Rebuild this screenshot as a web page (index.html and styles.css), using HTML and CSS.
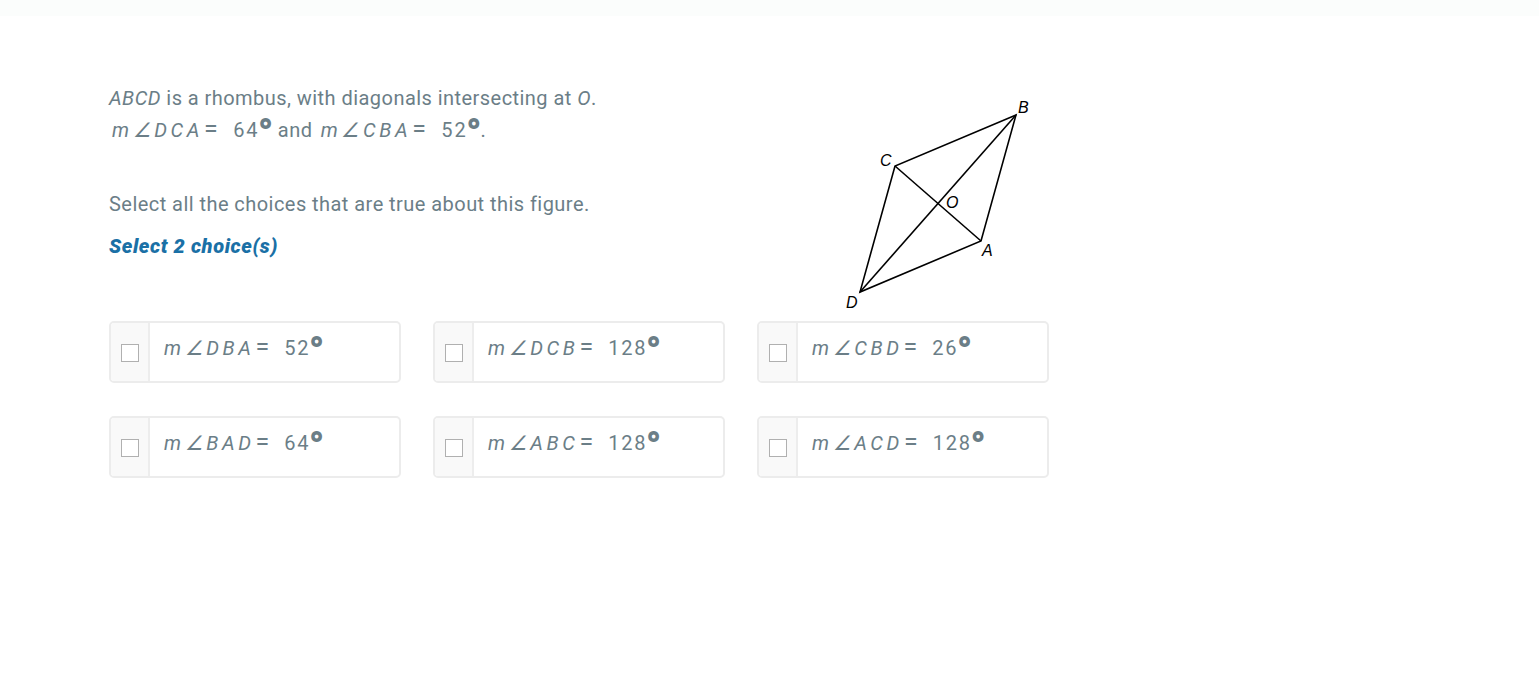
FILE: index.html
```html
<!DOCTYPE html>
<html>
<head>
<meta charset="utf-8">
<link rel="stylesheet" href="styles.css">
</head>
<body>
<div class="topband"></div>
<main class="page">
  <section class="question">
    <div class="prompt">
      <p class="line"><span class="mi">ABCD</span> is a rhombus, with diagonals intersecting at <span class="mi">O</span>.</p>
      <p class="line"><span class="math"><span class="mi sp">m∠DCA</span><span class="eq">=</span><span class="num">64</span><span class="deg">°</span></span> and <span class="math"><span class="mi sp">m∠CBA</span><span class="eq">=</span><span class="num">52</span><span class="deg">°</span></span>.</p>
      <p class="line instr">Select all the choices that are true about this figure.</p>
      <p class="line count">Select 2 choice(s)</p>
    </div>
    <svg class="figure" width="195" height="215" viewBox="0 0 195 215">
      <g stroke="#000" stroke-width="1.6" fill="none" stroke-linejoin="miter">
        <polygon points="171,20 50,71 15,197 136,146"/>
        <line x1="171" y1="20" x2="15" y2="197"/>
        <line x1="50" y1="71" x2="136" y2="146"/>
      </g>
      <g font-family="'Liberation Sans', Arial, sans-serif" font-style="italic" font-size="16" fill="#000">
        <text x="173" y="18">B</text>
        <text x="35" y="71">C</text>
        <text x="101" y="113">O</text>
        <text x="137" y="161">A</text>
        <text x="1" y="213">D</text>
      </g>
    </svg>
  </section>
  <section class="choices">
    <div class="choice"><div class="check"><span class="box"></span></div><div class="label"><span class="mi sp">m∠DBA</span><span class="eq">=</span><span class="num">52</span><span class="deg">°</span></div></div>
    <div class="choice"><div class="check"><span class="box"></span></div><div class="label"><span class="mi sp">m∠DCB</span><span class="eq">=</span><span class="num">128</span><span class="deg">°</span></div></div>
    <div class="choice"><div class="check"><span class="box"></span></div><div class="label"><span class="mi sp">m∠CBD</span><span class="eq">=</span><span class="num">26</span><span class="deg">°</span></div></div>
    <div class="choice"><div class="check"><span class="box"></span></div><div class="label"><span class="mi sp">m∠BAD</span><span class="eq">=</span><span class="num">64</span><span class="deg">°</span></div></div>
    <div class="choice"><div class="check"><span class="box"></span></div><div class="label"><span class="mi sp">m∠ABC</span><span class="eq">=</span><span class="num">128</span><span class="deg">°</span></div></div>
    <div class="choice"><div class="check"><span class="box"></span></div><div class="label"><span class="mi sp">m∠ACD</span><span class="eq">=</span><span class="num">128</span><span class="deg">°</span></div></div>
  </section>
</main>
</body>
</html>
```
FILE: styles.css
```css
html, body {
  margin: 0;
  padding: 0;
  background: #ffffff;
}
body {
  font-family: Roboto, "Open Sans", sans-serif;
  color: #6b7e87;
  font-size: 20px;
}
.topband {
  height: 16px;
  background: #fbfdfc;
}
.page {
  padding-left: 109px;
}
.question {
  display: flex;
  align-items: flex-start;
  padding-top: 66px;
}
.prompt {
  width: 736px;
}
.line {
  margin: 0;
  height: 32px;
  line-height: 32px;
  white-space: nowrap;
  letter-spacing: 0.45px;
}
.instr {
  margin-top: 42px;
}
.count {
  margin-top: 10px;
  color: #1a70a6;
  font-weight: 900;
  font-style: italic;
  letter-spacing: 0.6px;
}
.mi {
  font-style: italic;
}
.sp {
  letter-spacing: 3.6px;
}
.math {
  margin-left: 3px;
}
.eq {
  font-size: 25px;
  line-height: 0;
  margin: 0 15px 0 1px;
}
.num {
  letter-spacing: 1.8px;
}
.deg {
  font-family: "Open Sans", sans-serif;
  font-weight: 800;
  font-size: 30px;
  line-height: 0;
  vertical-align: -3px;
}
.figure {
  display: block;
  margin-top: 13px;
}
.choices {
  display: grid;
  grid-template-columns: repeat(3, 292px);
  column-gap: 32px;
  row-gap: 33px;
  margin-top: 11px;
}
.choice {
  display: flex;
  height: 62px;
  box-sizing: border-box;
  border: 2px solid #ececec;
  border-radius: 5px;
  overflow: hidden;
  background: #fff;
}
.check {
  width: 37px;
  flex: none;
  background: #f9f9f9;
  border-right: 2px solid #ededed;
  display: flex;
  align-items: center;
  justify-content: center;
}
.box {
  display: block;
  width: 16px;
  height: 16px;
  border: 1px solid #b0b0b0;
  background: #fff;
  margin-top: 1px;
}
.label {
  padding: 9px 0 0 14px;
  height: 32px;
  line-height: 32px;
  white-space: nowrap;
}
```
